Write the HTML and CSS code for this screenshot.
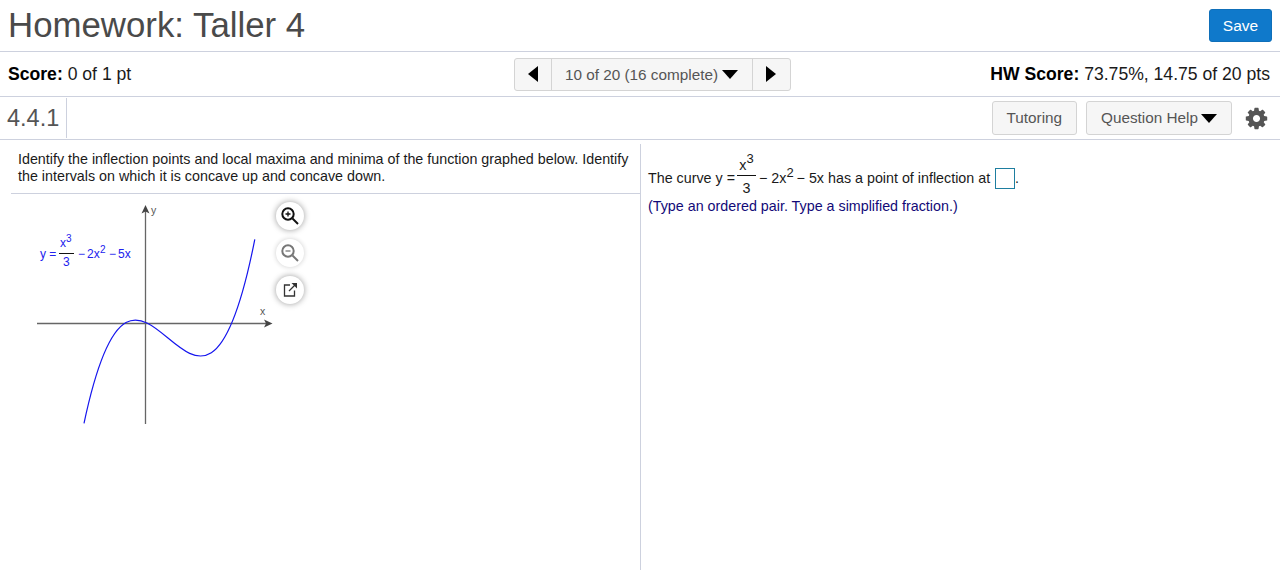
FILE: index.html
```html
<!DOCTYPE html>
<html lang="en">
<head>
<meta charset="utf-8">
<title>Homework: Taller 4</title>
<link rel="stylesheet" href="styles.css">
</head>
<body>
<div class="page">
  <header class="title-bar">
    <h1 class="title">Homework: Taller 4</h1>
    <button class="save">Save</button>
  </header>
  <div class="score-bar">
    <div class="score"><b>Score:</b> 0 of 1 pt</div>
    <div class="nav">
      <span class="nav-end"><svg class="tri" width="10" height="16" viewBox="0 0 10 16"><path d="M10 0V16L0 8Z"/></svg></span>
      <span class="nav-mid">10 of 20 (16 complete)<svg class="caret" width="16" height="9" viewBox="0 0 16 9"><path d="M0 0H16L8 9Z"/></svg></span>
      <span class="nav-end"><svg class="tri" width="10" height="16" viewBox="0 0 10 16"><path d="M0 0V16L10 8Z"/></svg></span>
    </div>
    <div class="hw-score"><b>HW Score:</b> 73.75%, 14.75 of 20 pts</div>
  </div>
  <div class="tool-bar">
    <div class="qnum">4.4.1</div>
    <div class="tool-actions">
      <button class="tool-btn">Tutoring</button>
      <button class="tool-btn help">Question Help<svg class="caret" width="16" height="9" viewBox="0 0 16 9"><path d="M0 0H16L8 9Z"/></svg></button>
      <svg class="gear" width="25" height="25" viewBox="0 0 1792 1792"><path d="M1152 896q0-106-75-181t-181-75-181 75-75 181 75 181 181 75 181-75 75-181zm512-109v222q0 12-8 23t-20 13l-185 28q-19 54-39 91 35 50 107 138 10 12 10 25t-9 23q-27 37-99 108t-94 71q-12 0-26-9l-138-108q-44 23-91 38-16 136-29 186-7 28-36 28h-222q-14 0-24.500-8.500t-11.500-21.500l-28-184q-49-16-90-37l-141 107q-10 9-25 9-14 0-25-11-126-114-165-168-7-10-7-23 0-12 8-23 15-21 51-66.500t54-70.500q-27-50-41-99l-183-27q-13-2-21-12.500t-8-23.500v-222q0-12 8-23t19-13l186-28q14-46 39-92-40-57-107-138-10-12-10-24 0-10 9-23 26-36 98.500-107.500t94.500-71.500q13 0 26 10l138 107q44-23 91-38 16-136 29-186 7-28 36-28h222q14 0 24.500 8.500t11.500 21.500l28 184q49 16 90 37l142-107q9-9 24-9 13 0 25 10 129 119 165 170 7 8 7 22 0 12-8 23-15 21-51 66.500t-54 70.500q26 50 41 98l183 28q13 2 21 12.500t8 23.500z"/></svg>
    </div>
  </div>
  <main class="panes">
    <section class="left">
      <p class="prompt">Identify the inflection points and local maxima and minima of the function graphed below. Identify the intervals on which it is concave up and concave down.</p>
      <div class="figure">
        <svg class="graph" width="264" height="236" viewBox="11 194 264 236">
          <g class="axis">
            <path d="M37 323.500H266M145.500 424V210"/>
          </g>
          <path class="arrow" d="M272.500 323.500L264 319.500L266 323.500L264 327.500ZM145.500 205L141.500 213.500L145.500 211.500L149.500 213.500Z"/>
          <path class="curve" d="M84 423.400C140.900 155.400 197.700 528.100 254.800 239.400"/>
          <text class="lab" x="151" y="214">y</text>
          <text class="lab" x="260" y="315">x</text>
          <g class="eq">
            <text x="40" y="258">y =</text>
            <text x="60" y="247">x</text>
            <text class="sup" x="66" y="242">3</text>
            <path class="bar" d="M59 253.500H74"/>
            <text x="63" y="266">3</text>
            <text x="78" y="258">&#8722;</text>
            <text x="87" y="258">2x</text>
            <text class="sup" x="100" y="253">2</text>
            <text x="109" y="258">&#8722;</text>
            <text x="118" y="258">5x</text>
          </g>
        </svg>
        <div class="zooms">
          <span class="zoom"><svg width="20" height="20" viewBox="0 0 20 20"><circle cx="8" cy="8" r="5.700" class="i-dark"/><path class="i-dark" d="M12.500 12.500L18 18" stroke-width="3"/><path class="i-thin" d="M5.500 8H10.500M8 5.500V10.500"/></svg></span>
          <span class="zoom dim"><svg width="20" height="20" viewBox="0 0 20 20"><circle cx="8" cy="8" r="5.700" class="i-gray"/><path class="i-gray" d="M12.500 12.500L18 18" stroke-width="3"/><path class="i-thin-gray" d="M5.500 8H10.500"/></svg></span>
          <span class="zoom"><svg width="20" height="20" viewBox="0 0 20 20"><path class="i-box" d="M10 5H4.500V16H14.500V10.500"/><path class="i-box" d="M9 11L15 5"/><path d="M11.500 3H17V8.500Z" fill="#333"/></svg></span>
        </div>
      </div>
    </section>
    <section class="right">
      <div class="statement">The curve y = <span class="frac"><span class="num">x<sup>3</sup></span><span class="den">3</span></span> &#8722; 2x<sup class="pow">2</sup> &#8722; 5x has a point of inflection at <span class="answer"></span>.</div>
      <p class="hint">(Type an ordered pair. Type a simplified fraction.)</p>
    </section>
  </main>
</div>
</body>
</html>
```
FILE: styles.css
```css
* { box-sizing: border-box; }
html, body { margin: 0; height: 100%; background: #fff; overflow: hidden; }
body { font-family: "Liberation Sans", Arial, sans-serif; color: #111; }
button { font-family: inherit; cursor: pointer; }
.page { display: flex; flex-direction: column; height: 570px; }

.title-bar { height: 52px; flex: none; display: flex; align-items: center; justify-content: space-between; padding: 0 8px; border-bottom: 1px solid #cdd1de; }
.title { margin: 0 0 2px; font-size: 34.800px; font-weight: 400; color: #4a4a4a; line-height: 48px; }
.save { width: 63px; height: 33px; background: #0f79cb; color: #fff; border: 1px solid #0f6fb9; border-radius: 3px; font-size: 15.500px; padding: 0; }

.score-bar { height: 45px; flex: none; display: grid; grid-template-columns: 1fr auto 1fr; align-items: center; padding: 0 10px 0 8px; border-bottom: 1px solid #cdd1de; font-size: 17.600px; color: #1a1a1a; }
.score, .hw-score { padding-top: 1px; }
.score b, .hw-score b { color: #000; }
.hw-score { text-align: right; }
.nav { display: flex; height: 33px; margin-left: 26px; border: 1px solid #d4d4d4; border-radius: 3px; background: #f6f6f6; color: #555; font-size: 15.300px; }
.nav-end { width: 37px; display: flex; align-items: center; justify-content: center; }
.nav-end:first-child { width: 36px; }
.nav-mid { width: 202px; padding-top: 1px; display: flex; align-items: center; justify-content: center; gap: 4px; border-left: 1px solid #d4d4d4; border-right: 1px solid #d4d4d4; }
.tri { fill: #000; }
.caret { fill: #000; flex: none; }

.tool-bar { height: 43px; flex: none; display: flex; align-items: center; justify-content: space-between; border-bottom: 1px solid #cdd1de; padding-right: 11px; }
.qnum { height: 40px; width: 67px; border-right: 1px solid #cdd1de; padding-left: 7px; font-size: 23.500px; line-height: 40px; color: #555; }
.tool-actions { display: flex; align-items: center; gap: 9px; }
.tool-btn { height: 34px; padding: 0 14px; background: #f6f6f6; border: 1px solid #d4d4d4; border-radius: 3px; color: #555; font-size: 15.300px; }
.help { display: flex; align-items: center; gap: 3px; }
.gear { fill: #555; margin-left: 3px; }

.panes { flex: 1; display: flex; padding-top: 4px; min-height: 0; }
.left { width: 641px; flex: none; border-right: 1px solid #cdd1de; }
.prompt { margin: 0 0 0 11px; padding: 7px 8px 8px 7px; border-bottom: 1px solid #cdd1de; font-size: 14.300px; line-height: 17px; color: #1a1a1a; height: 50px; }
.figure { display: flex; margin-left: 11px; }
.graph { display: block; flex: none; }
.axis path { fill: none; stroke: #666; stroke-width: 1.300; }
.arrow { fill: #444; }
.curve { fill: none; stroke: #1515ee; stroke-width: 1.200; }
.lab { font-size: 10.500px; fill: #555; }
.eq text { font-size: 12px; fill: #2222ee; }
.eq .sup { font-size: 10px; }
.bar { stroke: #111; stroke-width: 1; }
.zooms { display: flex; flex-direction: column; gap: 9px; margin-top: 8px; margin-left: 1px; }
.zoom { width: 28px; height: 28px; border-radius: 50%; background: #fff; box-shadow: 0 0 6px rgba(0,0,0,.4); display: flex; align-items: center; justify-content: center; }
.zoom.dim { box-shadow: 0 0 5px rgba(0,0,0,.2); }
.i-dark { fill: none; stroke: #111; stroke-width: 2; }
.i-thin { fill: none; stroke: #111; stroke-width: 1.300; }
.i-gray { fill: none; stroke: #777; stroke-width: 2; }
.i-thin-gray { fill: none; stroke: #777; stroke-width: 1.300; }
.i-box { fill: none; stroke: #333; stroke-width: 1.300; }

.right { flex: 1; padding: 14px 0 0 7px; font-size: 14.300px; color: #1a1a1a; }
.statement { white-space: nowrap; line-height: 17px; height: 33px; }
.frac { display: inline-block; vertical-align: -10px; width: 19px; margin: 0 -1px 0 -2px; text-align: center; }
.num { display: block; border-bottom: 1px solid #111; padding-top: 1px; line-height: 12px; height: 18px; white-space: nowrap; }
.num sup { font-size: 13px; line-height: 0; vertical-align: 7px; }
.den { display: block; padding-top: 5px; line-height: 15px; height: 22px; }
.pow { font-size: 13px; line-height: 0; vertical-align: 6px; margin-right: -1px; }
.answer { display: inline-block; width: 20px; height: 21px; border: 1px solid #1e7ea0; margin-left: 1px; vertical-align: -6px; }
.hint { margin: 7px 0 0; color: #120a78; line-height: 17px; }
```
